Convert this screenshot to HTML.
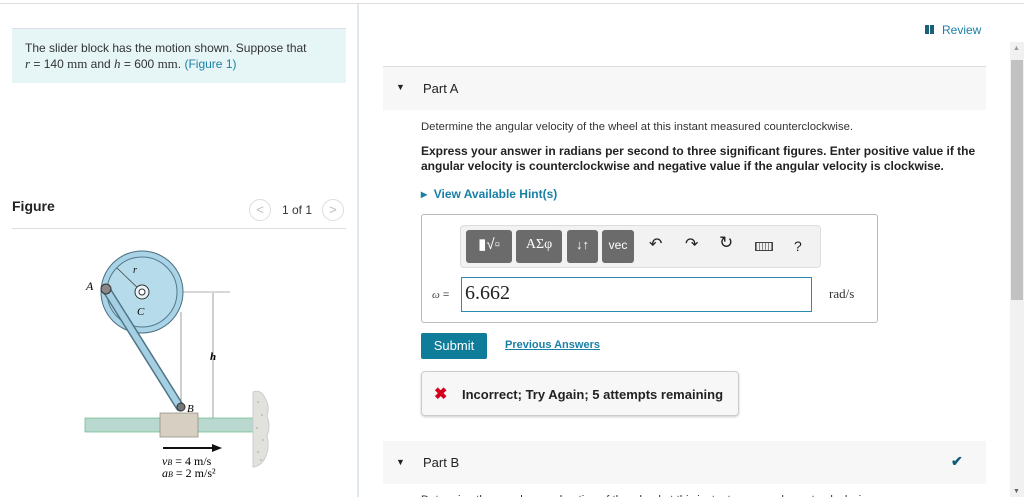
<!DOCTYPE html>
<html><head><meta charset="utf-8"><style>
*{margin:0;padding:0;box-sizing:border-box}
html{width:1024px;height:497px;overflow:hidden}
body{width:1024px;height:497px;overflow:hidden;background:#fff;font-family:"Liberation Sans",Arial,sans-serif;color:#333;position:relative}
.a{position:absolute}
.serif{font-family:"Liberation Serif",serif}
</style></head><body>
<div class="a" style="left:0;top:3px;width:1024px;height:1px;background:#ddd"></div>
<div class="a" style="left:357px;top:4px;width:2px;height:493px;background:#dfe6ec"></div>
<div class="a" style="left:12px;top:28px;width:334px;height:55px;background:#e6f5f6;border-top:1px solid #dde"></div>
<div class="a" style="left:25px;top:41px;font-size:12px;line-height:15px;color:#333">The slider block has the motion shown. Suppose that<br><i class="serif" style="font-size:13px">r</i> = 140 <span class="serif" style="font-size:13px">mm</span> and <i class="serif" style="font-size:13px">h</i> = 600 <span class="serif" style="font-size:13px">mm</span>. <span style="color:#1a7fa6">(Figure 1)</span></div>
<div class="a" style="left:12px;top:198px;font-size:14px;font-weight:bold;color:#222">Figure</div>
<div class="a" style="left:249px;top:199px;width:22px;height:22px;border:1px solid #ddd;border-radius:50%;color:#bbb;font-size:13px;text-align:center;line-height:20px">&lt;</div>
<div class="a" style="left:282px;top:203px;font-size:12px">1 of 1</div>
<div class="a" style="left:322px;top:199px;width:22px;height:22px;border:1px solid #ddd;border-radius:50%;color:#bbb;font-size:13px;text-align:center;line-height:20px">&gt;</div>
<div class="a" style="left:12px;top:228px;width:334px;height:1px;background:#ddd"></div>
<svg class="a" style="left:80px;top:245px" width="200" height="245" viewBox="80 245 200 245">
<line x1="230" y1="292" x2="150" y2="292" stroke="#999" stroke-width="0.8"/>
<line x1="213" y1="293" x2="213" y2="425" stroke="#888" stroke-width="0.8"/>
<line x1="181" y1="312" x2="181" y2="405" stroke="#888" stroke-width="0.8"/>
<circle cx="142" cy="292" r="41" fill="#a9d3e6" stroke="#4a6f80" stroke-width="1"/>
<circle cx="142" cy="292" r="35" fill="#b6dcec" stroke="#55798a" stroke-width="1"/>
<line x1="142" y1="292" x2="117" y2="268" stroke="#333" stroke-width="0.7"/>
<circle cx="142" cy="292" r="7" fill="#e8f4f8" stroke="#333"/>
<circle cx="142" cy="292" r="3" fill="#fff" stroke="#333"/>
<rect x="85" y="418" width="168" height="14" fill="#b9d8cf" stroke="#6b8" stroke-width="0.7"/>
<rect x="160" y="413" width="38" height="24" fill="#d8cfc3" stroke="#887" stroke-width="0.7"/>
<line x1="106" y1="289" x2="180" y2="407" stroke="#4f7586" stroke-width="9" stroke-linecap="round"/>
<line x1="106" y1="289" x2="180" y2="407" stroke="#a5cfe2" stroke-width="6" stroke-linecap="round"/>
<circle cx="106" cy="289" r="5" fill="#888" stroke="#333"/>
<circle cx="181" cy="407" r="4" fill="#777" stroke="#333"/>
<path d="M253 392 q8 -3 12 6 q5 8 2 18 q4 10 0 20 q3 12 -2 22 q-4 8 -12 9z" fill="#e2e2dc" stroke="#ccc"/>
<g fill="#bbb"><circle cx="258" cy="402" r="1"/><circle cx="262" cy="415" r="1"/><circle cx="257" cy="428" r="1"/><circle cx="263" cy="440" r="1"/><circle cx="258" cy="452" r="1"/><circle cx="261" cy="460" r="1"/></g>
<line x1="163" y1="448" x2="215" y2="448" stroke="#111" stroke-width="2"/>
<path d="M222 448 l-10 -4 v8z" fill="#111"/>
<text x="86" y="290" font-family="Liberation Serif" font-style="italic" font-size="12">A</text>
<text x="133" y="273" font-family="Liberation Serif" font-style="italic" font-size="10">r</text>
<text x="137" y="315" font-family="Liberation Serif" font-style="italic" font-size="11">C</text>
<text x="210" y="360" font-family="Liberation Serif" font-style="italic" font-weight="bold" font-size="11">h</text>
<text x="187" y="412" font-family="Liberation Serif" font-style="italic" font-size="11">B</text>
<text x="162" y="465" font-family="Liberation Serif" font-size="12"><tspan font-style="italic">v</tspan><tspan font-size="8" font-style="italic">B</tspan> = 4 m/s</text>
<text x="162" y="477" font-family="Liberation Serif" font-size="12"><tspan font-style="italic">a</tspan><tspan font-size="8" font-style="italic">B</tspan> = 2 m/s²</text>
</svg>
<div class="a" style="left:1010px;top:42px;width:14px;height:455px;background:#f1f1f1"></div>
<div class="a" style="left:1011px;top:60px;width:12px;height:240px;background:#c1c1c1"></div>
<div class="a" style="left:1013px;top:45px;font-size:7px;color:#999">▲</div>
<div class="a" style="left:1013px;top:488px;font-size:7px;color:#666">▼</div>
<div class="a" style="left:925px;top:25px;width:4px;height:9px;background:#1b5f7a"></div>
<div class="a" style="left:930px;top:25px;width:4px;height:9px;background:#1b5f7a"></div>
<div class="a" style="left:942px;top:23px;font-size:12px;color:#1a7fa6">Review</div>
<div class="a" style="left:383px;top:66px;width:603px;height:44px;background:#f7f7f7;border-top:1px solid #ddd"></div>
<div class="a" style="left:396px;top:82px;font-size:9px;color:#222">▼</div>
<div class="a" style="left:423px;top:81px;font-size:13px;color:#222">Part A</div>
<div class="a" style="left:421px;top:121px;font-size:11.3px;color:#333">Determine the angular velocity of the wheel at this instant measured counterclockwise.</div>
<div class="a" style="left:421px;top:144px;font-size:12px;line-height:15px;font-weight:bold;color:#222;width:580px">Express your answer in radians per second to three significant figures. Enter positive value if the angular velocity is counterclockwise and negative value if the angular velocity is clockwise.</div>
<div class="a" style="left:421px;top:187px;font-size:12px;font-weight:bold;color:#1a7fa6">▸&nbsp; View Available Hint(s)</div>
<div class="a" style="left:421px;top:214px;width:457px;height:109px;border:1px solid #bbb;border-radius:3px"></div>
<div class="a" style="left:460px;top:225px;width:361px;height:43px;background:#f2f2f2;border:1px solid #ddd;border-radius:4px"></div>
<div class="a" style="left:466px;top:230px;width:46px;height:33px;background:#6b6b6b;border-radius:3px;color:#fff;font-size:15px;text-align:center;line-height:30px">▮√▫</div>
<div class="a serif" style="left:516px;top:230px;width:46px;height:33px;background:#6b6b6b;border-radius:3px;color:#fff;font-size:14px;text-align:center;line-height:30px">ΑΣφ</div>
<div class="a" style="left:567px;top:230px;width:31px;height:33px;background:#6b6b6b;border-radius:3px;color:#fff;font-size:13px;text-align:center;line-height:30px">↓↑</div>
<div class="a" style="left:602px;top:230px;width:32px;height:33px;background:#6b6b6b;border-radius:3px;color:#fff;font-size:12px;text-align:center;line-height:30px">vec</div>
<div class="a" style="left:649px;top:234px;font-size:16px;color:#222">↶</div>
<div class="a" style="left:685px;top:234px;font-size:16px;color:#222">↷</div>
<div class="a" style="left:719px;top:233px;font-size:17px;color:#222">↻</div>
<div class="a" style="left:755px;top:242px;width:18px;height:9px;border:1px solid #444;background:repeating-linear-gradient(90deg,#888 0 1px,#eee 1px 3px)"></div>
<div class="a" style="left:794px;top:238px;font-size:14px;color:#222">?</div>
<div class="a" style="left:432px;top:289px;font-size:11px;color:#444"><i class="serif">ω</i> =</div>
<div class="a" style="left:461px;top:277px;width:351px;height:35px;border:1px solid #2a8ab0"></div>
<div class="a serif" style="left:465px;top:282px;font-size:20px;color:#222">6.662</div>
<div class="a serif" style="left:829px;top:286px;font-size:13px;color:#333">rad/s</div>
<div class="a" style="left:421px;top:333px;width:66px;height:26px;background:#0f7c99;border-radius:2px;color:#fff;font-size:13px;text-align:center;line-height:26px">Submit</div>
<div class="a" style="left:505px;top:339px;font-size:11px;font-weight:bold;color:#1a7fa6;text-decoration:underline">Previous Answers</div>
<div class="a" style="left:421px;top:371px;width:318px;height:45px;background:#f7f7f7;border:1px solid #ccc;border-radius:4px;box-shadow:0 1px 2px #ccc"></div>
<div class="a" style="left:434px;top:384px;font-size:16px;font-weight:bold;color:#d5001c">✖</div>
<div class="a" style="left:462px;top:387px;font-size:13px;font-weight:bold;color:#222">Incorrect; Try Again; 5 attempts remaining</div>
<div class="a" style="left:383px;top:441px;width:603px;height:43px;background:#f7f7f7"></div>
<div class="a" style="left:396px;top:457px;font-size:9px;color:#222">▼</div>
<div class="a" style="left:423px;top:455px;font-size:13px;color:#222">Part B</div>
<div class="a" style="left:951px;top:453px;font-size:14px;font-weight:bold;color:#0f5c77">✔</div>
<div class="a" style="left:421px;top:494px;font-size:11.3px;color:#333">Determine the angular acceleration of the wheel at this instant measured counterclockwise.</div>
</body></html>
